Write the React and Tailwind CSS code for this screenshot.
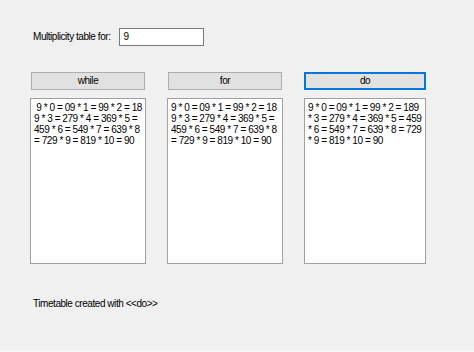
const LOOPS = [
  {
    id: 'while',
    width: 'w-[116px]',
    focused: false,
    lines: [
      ' 9 * 0 = 09 * 1 = 99 * 2 = 18',
      '9 * 3 = 279 * 4 = 369 * 5 =',
      '459 * 6 = 549 * 7 = 639 * 8',
      '= 729 * 9 = 819 * 10 = 90',
    ],
  },
  {
    id: 'for',
    width: 'w-[116px]',
    focused: false,
    lines: [
      '9 * 0 = 09 * 1 = 99 * 2 = 18',
      '9 * 3 = 279 * 4 = 369 * 5 =',
      '459 * 6 = 549 * 7 = 639 * 8',
      '= 729 * 9 = 819 * 10 = 90',
    ],
  },
  {
    id: 'do',
    width: 'w-[122px]',
    focused: true,
    lines: [
      '9 * 0 = 09 * 1 = 99 * 2 = 189',
      '* 3 = 279 * 4 = 369 * 5 = 459',
      '* 6 = 549 * 7 = 639 * 8 = 729',
      '* 9 = 819 * 10 = 90',
    ],
  },
];

export default function App() {
  return (
    <div className="w-[474px] h-[352px] overflow-hidden bg-[#f0f0f0] font-['Liberation_Sans',Arial,sans-serif] text-[10px] tracking-[-0.45px] text-black leading-[12px] border-b-2 border-[#f7f7f7]">
      {/* Input row */}
      <div className="pt-[28px] pl-[33px] flex items-center">
        <span>Multiplicity table for:</span>
        <div className="ml-[9px] w-[85px] h-[18px] bg-white border border-[#7a7a7a] flex items-center pl-[3px]">
          9
        </div>
      </div>

      {/* Loop columns */}
      <div className="mt-[26px] pl-[30px] flex gap-[21px]">
        {LOOPS.map((loop) => (
          <div key={loop.id} className={`${loop.width} flex flex-col`}>
            <div
              className={
                loop.focused
                  ? 'h-[18px] bg-[#e1e1e1] border-2 border-[#0078d7] flex items-center justify-center'
                  : 'h-[18px] mx-px bg-[#e1e1e1] border border-[#adadad] flex items-center justify-center'
              }
            >
              {loop.id}
            </div>
            <div className="mt-[8px] h-[166px] bg-white border border-[#a0a0a0] pl-[3px] pt-[3px] leading-[11px] whitespace-pre">
              {loop.lines.join('\n')}
            </div>
          </div>
        ))}
      </div>

      {/* Footer */}
      <div className="mt-[34px] pl-[33px]">Timetable created with &lt;&lt;do&gt;&gt;</div>
    </div>
  );
}
